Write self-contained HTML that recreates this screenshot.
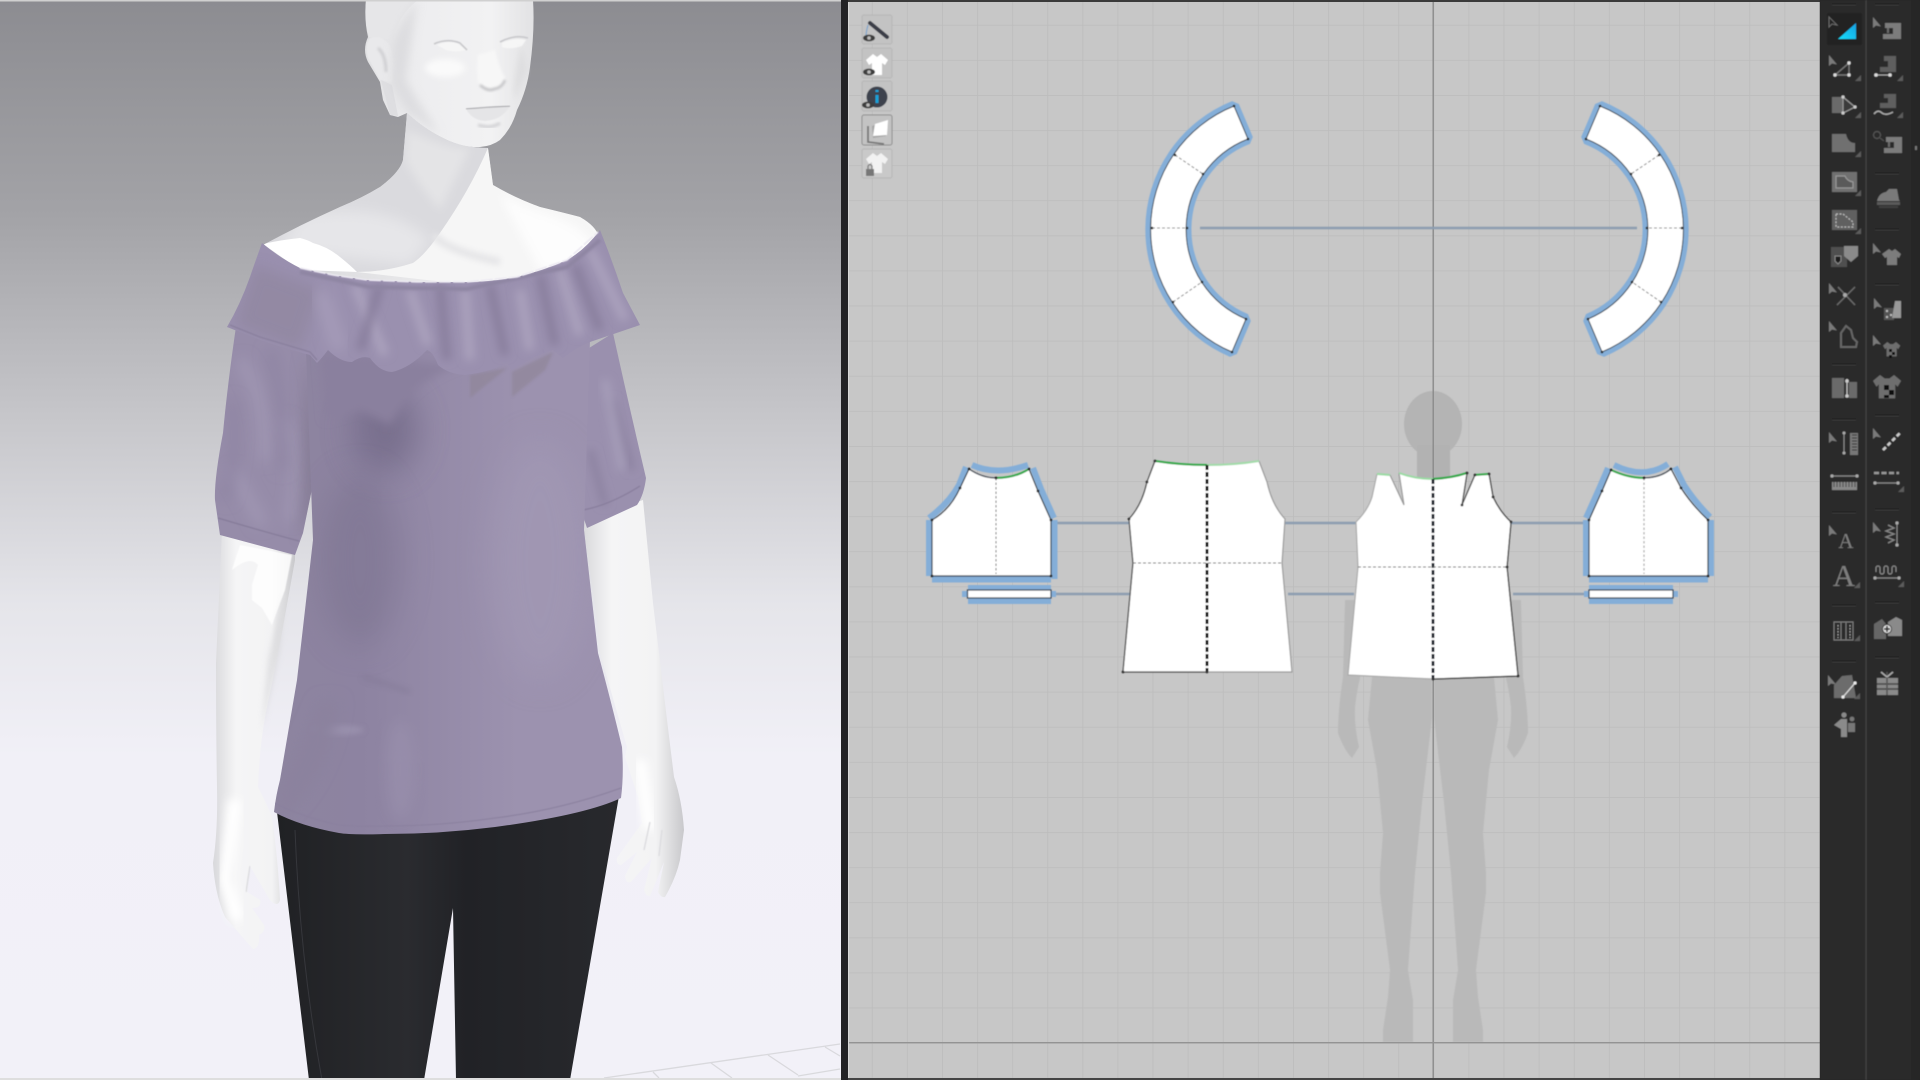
<!DOCTYPE html>
<html><head><meta charset="utf-8"><title>3D garment and 2D pattern editor</title>
<style>html,body{margin:0;padding:0;background:#222;width:1920px;height:1080px;overflow:hidden}svg{display:block}</style></head>
<body>
<svg xmlns="http://www.w3.org/2000/svg" width="1920" height="1080" viewBox="0 0 1920 1080">
<defs>
<linearGradient id="bg" x1="0" y1="0" x2="0" y2="1"><stop offset="0" stop-color="#8c8c91"/><stop offset=".2" stop-color="#a3a3a7"/><stop offset=".38" stop-color="#c5c5c9"/><stop offset=".56" stop-color="#e5e5ea"/><stop offset=".7" stop-color="#f1f0f7"/><stop offset="1" stop-color="#f2f1f8"/></linearGradient>
<linearGradient id="skin" x1="0" y1="0" x2="1" y2="0"><stop offset="0" stop-color="#d5d5d8"/><stop offset=".45" stop-color="#e8e8ea"/><stop offset="1" stop-color="#f8f8f8"/></linearGradient>
<linearGradient id="face" x1="0" y1="0" x2="1" y2="0"><stop offset="0" stop-color="#dfdfe1"/><stop offset=".3" stop-color="#ededef"/><stop offset=".75" stop-color="#f2f2f3"/><stop offset="1" stop-color="#e2e2e4"/></linearGradient>
<linearGradient id="arm" x1="0" y1="0" x2="1" y2="0"><stop offset="0" stop-color="#d8d8db"/><stop offset=".28" stop-color="#f5f5f6"/><stop offset=".72" stop-color="#f3f3f4"/><stop offset="1" stop-color="#c8c8cb"/></linearGradient>
<linearGradient id="shirt" x1="0" y1="0" x2="1" y2="0"><stop offset="0" stop-color="#8d849f"/><stop offset=".25" stop-color="#8d83a1"/><stop offset=".7" stop-color="#9c92af"/><stop offset="1" stop-color="#9c92af"/></linearGradient>
<linearGradient id="pant" x1="0" y1="0" x2="1" y2="0"><stop offset="0" stop-color="#202124"/><stop offset=".38" stop-color="#2a2b2f"/><stop offset=".55" stop-color="#212226"/><stop offset="1" stop-color="#28292d"/></linearGradient>
<linearGradient id="cyan" x1="0" y1="1" x2="1" y2="0"><stop offset="0" stop-color="#17e0ff"/><stop offset="1" stop-color="#1a9fe0"/></linearGradient>
<pattern id="grid" width="35.1" height="35.1" patternUnits="userSpaceOnUse" x="942" y="95"><path d="M0 0V35.1M0 0H35.1" stroke="#bcbcbc" stroke-width="1.6" fill="none"/></pattern>
<filter id="b0"><feGaussianBlur stdDeviation=".4"/></filter>
<filter id="b1" x="-30%" y="-30%" width="160%" height="160%"><feGaussianBlur stdDeviation="1.2"/></filter>
<filter id="b3" x="-30%" y="-30%" width="160%" height="160%"><feGaussianBlur stdDeviation="3"/></filter>
<filter id="b5" x="-40%" y="-40%" width="180%" height="180%"><feGaussianBlur stdDeviation="4.5"/></filter>
<filter id="b7" x="-40%" y="-40%" width="180%" height="180%"><feGaussianBlur stdDeviation="7"/></filter>
<filter id="b16" x="-80%" y="-80%" width="260%" height="260%"><feGaussianBlur stdDeviation="16"/></filter>
<clipPath id="vp"><rect x="0" y="0" width="841" height="1078"/></clipPath>
<clipPath id="ruf"><path id="rufp" d="M262 243Q254 265 250 277Q240 305 227 327L260 340Q290 350 310 355L317 363Q322 358 328 350Q340 362 352 362Q362 355 370 358Q380 372 392 372Q410 368 427 350Q433 352 438 365Q448 374 465 375Q490 372 507 363L512 370Q535 355 553 350L563 358Q575 348 590 342L640 325Q632 310 623 293Q612 260 600 230Q585 250 567 260Q545 270 517 277Q490 282 467 282L417 282L367 280L333 275L300 268Q280 258 262 243Z"/></clipPath>
<clipPath id="bod"><path d="M306 350L590 340L584 530L598 653Q612 705 622 747Q624 775 621 798Q585 815 495 827Q440 834 385 834Q350 835 339 833Q300 826 274 812Q276 795 280 780L297 680L313 540Z"/></clipPath>
<clipPath id="sk"><path d="M407 113Q425 130 447 140Q465 148 488 148L493 185Q515 198 540 207Q565 213 580 217Q596 226 599 237L600 300L262 300L263 245Q300 225 340 207Q362 198 380 187Q400 172 403 160Z"/></clipPath>
<clipPath id="sl"><path d="M237 320Q228 380 223 433Q214 480 215 500L220 535L295 555L303 533L330 400L320 330Z"/></clipPath>
<clipPath id="sr"><path d="M613 333Q630 410 646 478Q644 495 637 505L587 528L582 513L570 360Z"/></clipPath>
<g id="cur"><path d="M0 0V11L3 8.5L8 9.5Z" fill="#7a7a7a"/></g>
<g id="cor"><path d="M0 6H6V0Z" fill="#5c5c5c"/></g>
<g id="mach"><path d="M2 0H18V16H0V11H10V5H2Z" fill="#7b7b7b"/><rect x="4" y="5" width="2" height="5" fill="#6c6c6c"/></g>
<g id="eye"><ellipse cx="0" cy="0" rx="6" ry="3.4" fill="#3c3c3c"/><circle r="1.8" fill="#bbb"/></g>
<g id="sep"><path d="M0 0H24" stroke="#151515" stroke-width="1"/><path d="M0 1H24" stroke="#3b3b3b" stroke-width="1"/></g>
<g id="chk"><path d="M6 0L10 3H14L18 0L24 5L21 10L19 8V20H5V8L3 10L0 5Z" fill="#6e6e6e"/></g>
</defs>

<!-- 3D viewport -->
<rect width="841" height="1080" fill="url(#bg)"/>
<g clip-path="url(#vp)">
<g stroke="#d9d9dd" stroke-width="1.3" fill="none"><path d="M604 1078L840 1044M768 1055L798 1075M711 1063L732 1078M825 1047L840 1056M798 1076L840 1069M653 1072L659 1078"/></g>

<!-- head -->
<path d="M366 0Q364 20 368 37Q362 50 368 62L380 82L383 100L390 115L398 117L407 113Q425 130 447 140Q465 148 480 147Q492 146 500 140Q512 128 517 110Q527 90 530 67Q535 30 533 0Z" fill="url(#face)"/>
<path d="M366 0Q364 20 369 37L393 40Q398 15 418 0Z" fill="#e6e6e8"/>
<path d="M370 38Q364 45 368 58L380 80L392 82Q396 60 390 46Q382 34 370 38Z" fill="#e9e9eb" filter="url(#b0)"/>
<path d="M378 48Q386 55 386 72" stroke="#cfcfd2" stroke-width="3" fill="none" filter="url(#b1)"/>
<path d="M381 80L390 115L398 116L392 85Z" fill="#dedee1"/>
<path d="M418 0Q398 25 393 45L392 85L407 113L440 135L405 80Z" fill="#d2d2d5" filter="url(#b5)" opacity=".55"/>
<ellipse cx="445" cy="68" rx="20" ry="9" fill="#fafafa" filter="url(#b3)"/>
<g filter="url(#b0)">
<path d="M437 45Q448 40 458 44L466 50Q455 53 446 50Z" fill="#f6f6f6"/>
<path d="M502 43Q515 37 526 40L522 46Q510 50 502 47Z" fill="#f6f6f6"/>
<path d="M434 44Q447 38 460 43L467 50M500 42Q515 34 528 38" stroke="#c9c9cc" stroke-width="1.6" fill="none"/>
</g>
<path d="M478 55Q476 70 478 78Q476 88 494 89Q506 88 505 78Q498 65 495 50Z" fill="#f7f7f7" filter="url(#b1)"/>
<path d="M480 85Q488 92 494 89Q502 88 505 80" stroke="#bdbdc0" stroke-width="2.4" fill="none" filter="url(#b1)"/>
<path d="M466 109Q488 108 510 106Q502 120 485 121Q472 120 466 109Z" fill="#e5e5e7" filter="url(#b0)"/>
<path d="M466 109Q488 107 510 106" stroke="#adadb1" stroke-width="1.2" fill="none" filter="url(#b0)"/>
<path d="M478 125Q492 129 500 123" stroke="#d3d3d6" stroke-width="3" fill="none" filter="url(#b1)"/>
<path d="M522 45Q512 80 515 100L527 70Z" fill="#dadadc" filter="url(#b3)" opacity=".7"/>

<!-- neck & shoulders -->
<path d="M407 113Q425 130 447 140Q465 148 488 148L493 185Q515 198 540 207Q565 213 580 217Q596 226 599 237L600 300L262 300L263 245Q300 225 340 207Q362 198 380 187Q400 172 403 160Z" fill="url(#skin)"/>
<g clip-path="url(#sk)">
<path d="M407 113Q425 130 447 140Q465 148 488 148Q470 190 440 233Q425 255 413 263Q385 272 357 272L262 270V245L340 207L380 187Q400 172 403 160Z" fill="#dadade"/>
<path d="M300 215Q390 200 430 240L410 265L280 250Z" fill="#e6e6e9" filter="url(#b7)"/>
<path d="M407 130Q450 150 470 148L440 210Q415 180 405 160Z" fill="#e4e4e6" filter="url(#b5)"/>
<path d="M488 148Q470 190 440 233Q425 255 413 263Q385 272 357 272L600 300L599 237L580 217L540 207L493 185Z" fill="#f6f6f6"/>
<path d="M500 195L540 212Q575 222 590 240L600 270L540 270Z" fill="#fdfdfd" filter="url(#b5)"/>
<path d="M434 235Q445 250 500 262" stroke="#e6e6e8" stroke-width="8" fill="none" filter="url(#b3)"/>
<path d="M263 244Q280 240 300 238Q308 240 313 243Q328 247 340 257Q350 265 357 272L300 270Z" fill="#fff"/>
</g>

<!-- left arm -->
<path d="M222 530L216 663Q216 730 217 787Q218 830 213 863Q215 895 225 917L253 949Q260 948 259 935Q266 932 264 925L252 908Q262 908 260 900L247 892L250 866Q258 880 270 900Q278 908 280 900Q278 860 272 817Q265 800 258 787Q260 740 267 707Q277 660 283 627L295 560L295 530Z" fill="url(#arm)"/>
<path d="M232 570Q250 555 258 565L252 585L252 600L262 608L272 625L285 590L292 555L240 545Z" fill="#fff" opacity=".85" filter="url(#b0)"/>
<path d="M268 660Q276 620 285 595L280 650L262 730Z" fill="#d4d4d7" filter="url(#b3)" opacity=".6"/>
<path d="M235 800L225 880L238 920" stroke="#fff" stroke-width="14" fill="none" filter="url(#b5)"/>
<path d="M250 866L246 892" stroke="#dcdcdf" stroke-width="1.4" fill="none" filter="url(#b0)"/>

<!-- right arm -->
<path d="M583 520L597 620L600 653L627 747L625 757L638 797L642 823L617 858Q616 865 621 865L637 852L625 876Q626 884 631 882L652 858L644 890Q646 897 650 896L664 862L658 892Q661 898 665 897Q676 878 680 860L684 830Q682 800 674 777L667 720L653 603L643 500Z" fill="url(#arm)"/>
<path d="M640 760L650 830" stroke="#fff" stroke-width="12" fill="none" filter="url(#b5)"/>
<path d="M650 822L644 850M662 830L659 856" stroke="#dcdcdf" stroke-width="1.4" fill="none" filter="url(#b0)"/>

<!-- pants -->
<path d="M277 812L309 1080H424L453 908L456 1080H570L619 796L621 790Z" fill="url(#pant)"/>
<path d="M295 830Q300 960 322 1080" stroke="#36373c" stroke-width="1" fill="none"/>

<!-- sleeves -->
<path d="M237 320Q228 380 223 433Q214 480 215 500L220 535L295 555L303 533L330 400L320 330Z" fill="#968ca9"/>
<g clip-path="url(#sl)">
<path d="M240 360Q268 400 265 460M285 420Q305 470 290 520M232 470Q255 510 262 525" stroke="#a39ab6" stroke-width="9" fill="none" filter="url(#b7)"/>
<path d="M232 400Q240 450 225 500M270 350Q285 400 282 470" stroke="#8d83a1" stroke-width="8" fill="none" filter="url(#b7)"/>
<path d="M305 350L328 480L300 540Z" fill="#80778f" filter="url(#b7)" opacity=".7"/>
<path d="M218 518Q258 530 299 541" stroke="#857b99" stroke-width="1.2" fill="none" filter="url(#b0)"/>
</g>
<path d="M613 333Q630 410 646 478Q644 495 637 505L587 528L582 513L570 360Z" fill="#9a90ae"/>
<g clip-path="url(#sr)">
<path d="M612 400L632 470M590 450L605 505" stroke="#8a809e" stroke-width="6" fill="none" filter="url(#b5)"/>
<path d="M605 380L622 470" stroke="#a8a0bb" stroke-width="7" fill="none" filter="url(#b5)"/>
<path d="M583 510Q610 505 640 486" stroke="#877d9b" stroke-width="1.2" fill="none" filter="url(#b0)"/>
</g>

<!-- body -->
<path d="M306 350L590 340L584 530L598 653Q612 705 622 747Q624 775 621 798Q585 815 495 827Q440 834 385 834Q350 835 339 833Q300 826 274 812Q276 795 280 780L297 680L313 540Z" fill="url(#shirt)"/>
<g clip-path="url(#bod)">
<ellipse cx="385" cy="430" rx="32" ry="42" fill="#736b88" filter="url(#b16)" opacity=".8"/>
<ellipse cx="360" cy="560" rx="40" ry="85" fill="#7a728e" filter="url(#b16)" opacity=".5"/>
<path d="M320 355L460 365Q430 375 410 395L390 425L360 410L325 420Z" fill="#8a809e" filter="url(#b5)"/>
<path d="M470 398L470 375L507 368Z" fill="#908699" filter="url(#b1)" opacity=".7"/>
<path d="M512 397L512 372L553 352L545 370Z" fill="#908699" filter="url(#b1)" opacity=".7"/>
<ellipse cx="540" cy="560" rx="50" ry="120" fill="#a39ab5" filter="url(#b16)" opacity=".6"/>
<ellipse cx="338" cy="730" rx="26" ry="5" fill="#9f96b2" filter="url(#b3)" opacity=".7"/>
<path d="M363 677Q390 685 410 692" stroke="#7f7692" stroke-width="5" fill="none" filter="url(#b3)" opacity=".4"/>
<path d="M280 820Q330 780 340 700L320 700L280 790Z" fill="#8b829e" filter="url(#b7)"/>
<ellipse cx="400" cy="770" rx="14" ry="50" fill="#a299b5" filter="url(#b7)" opacity=".35"/>
<path d="M274 803Q305 818 339 825Q360 827 385 826Q440 826 495 818Q560 810 621 788" stroke="#8a809e" stroke-width="1.1" fill="none" filter="url(#b0)"/>
</g>

<!-- ruffle -->
<path d="M262 243Q254 265 250 277Q240 305 227 327L260 340Q290 350 310 355L317 363Q322 358 328 350Q340 362 352 362Q362 355 370 358Q380 372 392 372Q410 368 427 350Q433 352 438 365Q448 374 465 375Q490 372 507 363L512 370Q535 355 553 350L563 358Q575 348 590 342L640 325Q632 310 623 293Q612 260 600 230Q585 250 567 260Q545 270 517 277Q490 282 467 282L417 282L367 280L333 275L300 268Q280 258 262 243Z" fill="#9a90af"/>
<g clip-path="url(#ruf)">
<path d="M255 265L235 325L300 350L320 290Z" fill="#90869f" filter="url(#b7)" opacity=".7"/>
<path d="M320 290L340 350" stroke="#a69cb9" stroke-width="14" fill="none" filter="url(#b7)"/>
<path d="M355 285L385 355M410 290L428 345M465 290L470 360M520 290L530 350M560 270L580 335M590 250L625 320" stroke="#aca3be" stroke-width="9" fill="none" filter="url(#b5)"/>
<path d="M380 285L360 350M440 285L447 360M490 285L505 355M540 275L555 345M575 265L600 330" stroke="#877d9b" stroke-width="8" fill="none" filter="url(#b5)"/>
<path d="M300 272L370 287L467 289L567 267L600 240" stroke="#8e85a2" stroke-width="4" fill="none" filter="url(#b1)"/>
<path d="M230 325L260 337L310 352L317 360" stroke="#8a809e" stroke-width="1.4" fill="none" filter="url(#b0)"/>
</g>
<path d="M300 268L333 275L367 280L417 282L467 282L517 277L567 260L598 232" stroke="#ece9f2" stroke-width="1.6" fill="none" stroke-dasharray="12 2" filter="url(#b0)"/>
</g>
<rect y="1078" width="841" height="2" fill="#dedede"/>
<rect width="841" height="1.5" fill="#d0d0d0"/>

<!-- divider -->
<rect x="841" width="7" height="1080" fill="#222225"/>

<!-- pattern pane -->
<rect x="848" width="972" height="1080" fill="#c7c7c7"/>
<rect x="848" width="972" height="1080" fill="url(#grid)"/>
<rect x="848" width="1" height="1080" fill="#d8d8d8"/>
<rect x="848" width="972" height="2" fill="#3a3a3a"/>
<rect x="848" y="1078" width="972" height="2" fill="#444"/>

<!-- avatar silhouette -->
<g filter="url(#b0)">
<g fill="#b9b9b9">
<path d="M1372 677L1368 720L1377 770L1383 833L1380 873L1380 893L1390 970L1388 997L1383 1030L1383 1042H1413V1000L1408 970L1415 873L1417 853L1422 803L1432 718V660H1360V550H1433Z"/>
<path d="M1494 677L1498 720L1489 770L1483 833L1486 873L1486 893L1476 970L1478 997L1483 1030L1483 1042H1453V1000L1458 970L1451 873L1449 853L1444 803L1434 718V660H1506V550H1433Z"/>
<path d="M1345 600L1343 677Q1338 710 1338 733Q1344 750 1352 758L1359 747Q1354 725 1355 707Q1357 690 1360 678L1365 600Z"/>
<path d="M1521 600L1523 677Q1528 710 1528 733Q1522 750 1514 758L1507 747Q1512 725 1511 707Q1509 690 1506 678L1501 600Z"/>
<path d="M1378 520L1365 660H1501L1488 520Z"/>
</g>
<ellipse cx="1433" cy="424" rx="29" ry="33" fill="#b4b4b4"/>
<path d="M1417 445V482H1450V445Z" fill="#b2b2b2"/>
</g>

<!-- axes -->
<rect x="1432.5" y="2" width="1.4" height="1076" fill="#8b8b8b"/>
<rect x="849" y="1042" width="971" height="1.4" fill="#939393"/>

<g filter="url(#b0)">
<!-- connectors -->
<g stroke="#8c9db0" stroke-width="2.4" fill="none">
<path d="M1200 228H1637"/>
<path d="M1057 523H1130M1285 523H1356M1511 523H1584"/>
<path d="M1056 594H1130M1288 594H1354M1513 594H1584"/>
</g>

<!-- arcs -->
<path d="M1234 106A133 133 0 0 0 1232 352L1246 319A97 97 0 0 1 1248 139Z" fill="#fff" stroke="#84aed8" stroke-width="10.5" stroke-linejoin="bevel" paint-order="stroke"/>
<path d="M1234 106A133 133 0 0 0 1232 352L1246 319A97 97 0 0 1 1248 139Z" fill="#fff" stroke="#3a4452" stroke-width="1"/>
<path d="M1175 155L1203 174M1152 228H1187M1173 302L1202 282" stroke="#8a8a8a" stroke-width="1" stroke-dasharray="3 2" fill="none"/>
<path d="M1600 106A133 133 0 0 1 1602 352L1588 319A97 97 0 0 0 1586 139Z" fill="#fff" stroke="#84aed8" stroke-width="10.5" stroke-linejoin="bevel" paint-order="stroke"/>
<path d="M1600 106A133 133 0 0 1 1602 352L1588 319A97 97 0 0 0 1586 139Z" fill="#fff" stroke="#3a4452" stroke-width="1"/>
<path d="M1659 155L1631 174M1682 228H1647M1661 302L1632 282" stroke="#8a8a8a" stroke-width="1" stroke-dasharray="3 2" fill="none"/>
<g fill="#222"><circle cx="1234" cy="106" r="1.3"/><circle cx="1248" cy="139" r="1.3"/><circle cx="1175" cy="155" r="1.3"/><circle cx="1203" cy="174" r="1.3"/><circle cx="1152" cy="228" r="1.3"/><circle cx="1187" cy="228" r="1.3"/><circle cx="1173" cy="302" r="1.3"/><circle cx="1202" cy="282" r="1.3"/><circle cx="1246" cy="319" r="1.3"/><circle cx="1232" cy="352" r="1.3"/><circle cx="1600" cy="106" r="1.3"/><circle cx="1586" cy="139" r="1.3"/><circle cx="1659" cy="155" r="1.3"/><circle cx="1631" cy="174" r="1.3"/><circle cx="1682" cy="228" r="1.3"/><circle cx="1647" cy="228" r="1.3"/><circle cx="1661" cy="302" r="1.3"/><circle cx="1632" cy="282" r="1.3"/><circle cx="1588" cy="319" r="1.3"/><circle cx="1602" cy="352" r="1.3"/></g>

<!-- left sleeve piece -->
<g fill="none" stroke="#84aed8" stroke-width="6"><path d="M929 520V576"/><path d="M1054.5 520V579"/><path d="M932 579.5H1051"/><path d="M929 518Q949 503 959 485L966 467"/><path d="M972 465Q996 476 1028 465"/><path d="M1033 468L1041 489L1054 518"/></g>
<path d="M932 520Q950 510 960 488L969 469Q982 478 996 478Q1015 478 1029 469L1038 491L1051 520V576H932Z" fill="#fff"/>
<path d="M969 469Q982 478 996 478" stroke="#3b4450" stroke-width="1.2" fill="none"/>
<path d="M996 478Q1015 478 1029 469" stroke="#35a84b" stroke-width="2" fill="none"/>
<path d="M932 520V576H1051V520L1038 491L1029 469M932 520Q950 510 960 488L969 469" stroke="#2d3745" stroke-width="1.2" fill="none"/>
<path d="M996 478V574" stroke="#666" stroke-width="1" stroke-dasharray="2.5 2"/>
<g fill="#222"><circle cx="932" cy="520" r="1.4"/><circle cx="960" cy="488" r="1.4"/><circle cx="969" cy="469" r="1.4"/><circle cx="996" cy="478" r="1.4"/><circle cx="1029" cy="469" r="1.4"/><circle cx="1038" cy="491" r="1.4"/><circle cx="1051" cy="520" r="1.4"/><circle cx="1051" cy="576" r="1.4"/><circle cx="932" cy="576" r="1.4"/></g>
<g fill="#84aed8"><rect x="968" y="585" width="83" height="5"/><rect x="968" y="598" width="83" height="6"/><rect x="962" y="591" width="5" height="6"/><rect x="1051" y="591" width="5" height="6"/></g>
<rect x="967.5" y="590" width="83.5" height="8" fill="#fff" stroke="#2d3745" stroke-width="1.2"/>

<!-- right sleeve piece -->
<g fill="none" stroke="#84aed8" stroke-width="6"><path d="M1586 520V576"/><path d="M1711 520V576"/><path d="M1589 579.5H1708"/><path d="M1586 518L1599 489L1608 468"/><path d="M1614 465Q1644 480 1668 464"/><path d="M1675 467L1684 485Q1695 502 1710 517"/></g>
<path d="M1589 520L1602 491L1611 470Q1628 478 1644 478Q1660 478 1671 469L1681 488Q1692 505 1708 520V576H1589Z" fill="#fff"/>
<path d="M1589 576V520L1602 491L1611 470M1671 469L1681 488Q1692 505 1708 520V576H1589" stroke="#2d3745" stroke-width="1.2" fill="none"/>
<path d="M1611 470Q1628 478 1644 478" stroke="#35a84b" stroke-width="1.8" fill="none"/>
<path d="M1644 478Q1660 478 1671 469" stroke="#3b4450" stroke-width="1.2" fill="none"/>
<path d="M1644 478V574" stroke="#aaa" stroke-width="1.2" stroke-dasharray="2.5 2"/>
<g fill="#222"><circle cx="1589" cy="520" r="1.4"/><circle cx="1602" cy="491" r="1.4"/><circle cx="1611" cy="470" r="1.4"/><circle cx="1644" cy="478" r="1.4"/><circle cx="1671" cy="469" r="1.4"/><circle cx="1681" cy="488" r="1.4"/><circle cx="1708" cy="520" r="1.4"/><circle cx="1708" cy="576" r="1.4"/><circle cx="1589" cy="576" r="1.4"/></g>
<g fill="#84aed8"><rect x="1589" y="585" width="84" height="5"/><rect x="1589" y="598" width="84" height="6"/><rect x="1584" y="591" width="5" height="6"/><rect x="1673" y="591" width="5" height="6"/></g>
<rect x="1589" y="590" width="84" height="8" fill="#fff" stroke="#2d3745" stroke-width="1.2"/>

<!-- front body -->
<path d="M1155 461Q1180 465 1207 465Q1235 465 1259 461L1267 482Q1272 505 1285 519L1282 563L1292 672H1123L1133 563L1129 519Q1142 505 1147 482Z" fill="#fff"/>
<path d="M1155 461L1147 482Q1142 505 1129 519L1133 563L1123 672H1207" stroke="#444" stroke-width="1.2" fill="none"/>
<path d="M1259 461L1267 482Q1272 505 1285 519L1282 563L1292 672H1207" stroke="#9a9a9a" stroke-width="1.2" fill="none"/>
<path d="M1155 461Q1180 465 1207 465" stroke="#36a84a" stroke-width="2" fill="none"/>
<path d="M1207 465Q1235 465 1259 461" stroke="#a2dba9" stroke-width="2" fill="none"/>
<path d="M1207 465V672" stroke="#000" stroke-width="2.7" stroke-dasharray="5 2"/>
<path d="M1133 563H1282" stroke="#6a6a6a" stroke-width="1.1" stroke-dasharray="3 2"/>

<!-- back body -->
<path d="M1377 474L1390 475L1404 505L1399 473Q1415 479 1433 479Q1452 478 1467 473L1462 505L1475 475L1489 474L1493 497Q1500 512 1511 522L1507 567L1518 676L1433 679L1348 675L1358 567L1356 522Q1368 510 1372 497Z" fill="#fff"/>
<path d="M1377 474L1372 497Q1368 510 1356 522L1358 567L1348 675L1433 679" stroke="#aaa" stroke-width="1.2" fill="none"/>
<path d="M1390 475L1404 505L1399 473" stroke="#999" stroke-width="1.2" fill="none"/>
<path d="M1467 473L1462 505L1475 475" stroke="#444" stroke-width="1.2" fill="none"/>
<path d="M1489 474L1493 497Q1500 512 1511 522L1507 567L1518 676L1433 679" stroke="#333" stroke-width="1.2" fill="none"/>
<path d="M1377 474L1390 475M1399 473Q1415 479 1433 479" stroke="#9adba3" stroke-width="2" fill="none"/>
<path d="M1433 479Q1452 478 1467 473M1475 475L1489 474" stroke="#36a84a" stroke-width="2" fill="none"/>
<path d="M1433 479V679" stroke="#0d1620" stroke-width="2.7" stroke-dasharray="5 2"/>
<path d="M1358 567H1507" stroke="#6a6a6a" stroke-width="1.1" stroke-dasharray="3 2"/>
<g fill="#333"><circle cx="1155" cy="461" r="1.4"/><circle cx="1147" cy="482" r="1.4"/><circle cx="1129" cy="519" r="1.4"/><circle cx="1123" cy="672" r="1.4"/><circle cx="1207" cy="672" r="1.4"/><circle cx="1467" cy="473" r="1.4"/><circle cx="1462" cy="505" r="1.4"/><circle cx="1475" cy="475" r="1.4"/><circle cx="1489" cy="474" r="1.4"/><circle cx="1493" cy="497" r="1.4"/><circle cx="1511" cy="522" r="1.4"/><circle cx="1507" cy="567" r="1.4"/><circle cx="1518" cy="676" r="1.4"/><circle cx="1433" cy="679" r="1.4"/></g>

<!-- pattern mini toolbar -->
<g fill="#c3c3c3" stroke="#b6b6b6" stroke-width="1"><rect x="862" y="15" width="30" height="29" rx="2"/><rect x="862" y="48" width="30" height="30" rx="2"/><rect x="862" y="81" width="30" height="30" rx="2"/><rect x="862" y="115" width="30" height="30" rx="2" stroke="#8f8f8f"/><rect x="862" y="149" width="30" height="29" rx="2" fill="#c9c9c9"/></g>
<path d="M870 23L887 37" stroke="#3a3e46" stroke-width="4" stroke-linecap="round"/>
<path d="M868 25Q866 32 866 37" stroke="#6ea0d0" stroke-width="1" fill="none"/>
<use href="#eye" x="869" y="38"/>
<path d="M873 54L877 57L881 54L888 60L885 65L882 63V75H872V63L869 65L866 60Z" fill="#fff"/>
<use href="#eye" x="869" y="72"/>
<circle cx="877" cy="97" r="10.5" fill="#3c424e"/>
<path d="M877 90V92M877 95V103" stroke="#19a0d8" stroke-width="3"/>
<use href="#eye" x="868" y="105"/>
<path d="M868 126V142L884 144" stroke="#777" stroke-width="1.8" fill="none"/>
<path d="M872 126L887 121L886 136L873 138Z" fill="#8a8a8a" opacity=".5"/>
<path d="M875 124L888 120L887 135L873 136Z" fill="#fff"/>
<path d="M873 153L877 156L881 153L888 159L885 164L882 162V173H872V162L869 164L866 159Z" fill="#f2f2f2"/>
<rect x="866" y="169" width="8" height="7" fill="#777"/><path d="M868 169V166Q870 163 872 166V169" stroke="#777" stroke-width="1.2" fill="none"/>

<!-- right toolbar -->
<rect x="1820" width="100" height="1080" fill="#2b2b2b"/>
<rect x="1865.5" width="1.2" height="1080" fill="#454545"/>
<rect x="1911" width="9" height="1080" fill="#262626"/>
<rect x="1915" y="146" width="2" height="4" fill="#777"/>
<rect x="1827" y="13" width="35" height="32" rx="2" fill="#202020"/>

<use href="#sep" x="1832" y="4"/><use href="#sep" x="1875" y="4"/><use href="#sep" x="1875" y="173"/><use href="#sep" x="1875" y="229"/><use href="#sep" x="1875" y="284"/><use href="#sep" x="1832" y="364"/><use href="#sep" x="1832" y="419"/><use href="#sep" x="1875" y="415"/><use href="#sep" x="1832" y="512"/><use href="#sep" x="1875" y="509"/><use href="#sep" x="1832" y="605"/><use href="#sep" x="1875" y="602"/><use href="#sep" x="1832" y="661"/><use href="#sep" x="1875" y="657"/>

<!-- col 1 -->
<path d="M1829 17V27L1832 24L1837 25Z" fill="none" stroke="#6a6a6a" stroke-width="1"/>
<path d="M1838 39H1856V23Z" fill="url(#cyan)"/>

<use href="#cur" x="1829" y="55"/><path d="M1835 75H1849V63Z" fill="none" stroke="#777" stroke-width="1.4"/><g fill="#ddd"><circle cx="1835" cy="75" r="1.7"/><circle cx="1849" cy="75" r="1.7"/><circle cx="1849" cy="63" r="1.7"/></g><use href="#cor" x="1855" y="75"/>
<rect x="1832" y="97" width="12" height="16" fill="#6a6a6a"/><path d="M1843 97L1855 107L1843 113Z" fill="#3a3a3a" stroke="#999" stroke-width="1.2"/><g fill="#ccc"><circle cx="1843" cy="113" r="1.6"/><circle cx="1855" cy="107" r="1.6"/><circle cx="1843" cy="97" r="1.6"/></g><use href="#cor" x="1855" y="112"/>
<path d="M1832 134H1846Q1848 143 1855 143V152H1832Z" fill="#6f6f6f"/><use href="#cor" x="1855" y="151"/>
<rect x="1832" y="172" width="25" height="20" fill="#6f6f6f"/><path d="M1836 176H1845Q1847 181 1853 182V188H1836Z" fill="#5a5a5a" stroke="#999" stroke-width="1.2"/><use href="#cor" x="1855" y="190"/>
<rect x="1832" y="210" width="25" height="20" fill="#616161"/><path d="M1836 214H1843L1853 222V227H1836Z" fill="none" stroke="#bbb" stroke-width="1.2" stroke-dasharray="2 1.5"/><use href="#cor" x="1855" y="228"/>
<rect x="1831" y="247" width="16" height="20" fill="#505050"/><path d="M1835 256H1841V261L1838 264L1835 261Z" fill="#1c1c1c" stroke="#888"/><path d="M1844 246H1858V256L1851 262L1844 256Z" fill="#8a8a8a"/>
<use href="#cur" x="1829" y="283"/><path d="M1837 305L1855 287M1838 287L1855 305" stroke="#6c6c6c" stroke-width="1.4"/><circle cx="1845" cy="295" r="2" fill="#aaa"/>
<use href="#cur" x="1829" y="321"/><path d="M1841 333L1846 326L1851 330L1853 338L1857 342L1856 347H1841Z" fill="none" stroke="#666" stroke-width="2"/>
<rect x="1832" y="378" width="12" height="20" fill="#6a6a6a"/><rect x="1849" y="382" width="8" height="16" fill="#6a6a6a"/><path d="M1847 379V397" stroke="#bbb" stroke-width="1.5"/><circle cx="1847" cy="381" r="1.8" fill="#ccc"/><circle cx="1847" cy="396" r="1.8" fill="#ccc"/>

<use href="#cur" x="1829" y="432"/><path d="M1844 433V453" stroke="#888" stroke-width="1.2"/><circle cx="1844" cy="433" r="1.5" fill="#aaa"/><circle cx="1844" cy="453" r="1.5" fill="#aaa"/><rect x="1850" y="433" width="8" height="22" fill="#777"/><path d="M1852 435H1857M1852 438H1857M1852 441H1857M1852 444H1857M1852 447H1857M1852 450H1857" stroke="#333" stroke-width=".9"/>
<path d="M1832 476H1857" stroke="#888" stroke-width="1.2"/><circle cx="1832" cy="476" r="1.6" fill="#aaa"/><circle cx="1857" cy="476" r="1.6" fill="#aaa"/><rect x="1832" y="482" width="25" height="8" fill="#888"/><path d="M1834 482V487M1837 482V487M1840 482V487M1843 482V487M1846 482V487M1849 482V487M1852 482V487M1855 482V487" stroke="#333" stroke-width=".8"/>
<use href="#cur" x="1829" y="525"/><text x="1846" y="548" font-family="'Liberation Serif',serif" font-size="21" text-anchor="middle" fill="#7e7e7e">A</text>
<text x="1844" y="586" font-family="'Liberation Serif',serif" font-size="31" text-anchor="middle" fill="#7e7e7e">A</text><use href="#cor" x="1854" y="582"/>
<path d="M1834 622H1853V640H1834ZM1841 622V640M1846 622V640" fill="none" stroke="#7a7a7a" stroke-width="1.2"/><path d="M1838 625V638M1850 625V638" stroke="#aaa" stroke-width="1" stroke-dasharray="1.5 1.5"/><use href="#cor" x="1854" y="635"/>
<use href="#cur" x="1828" y="675"/><path d="M1834 685L1842 676L1852 675L1856 698H1834Z" fill="#6c6c6c"/><path d="M1843 697L1855 683" stroke="#ddd" stroke-width="1.3"/><circle cx="1843" cy="697" r="1.6" fill="#eee"/><circle cx="1855" cy="683" r="1.6" fill="#eee"/><use href="#cor" x="1854" y="693"/>
<circle cx="1844" cy="715" r="2.6" fill="#8a8a8a"/><path d="M1834 725L1841 719H1847V737H1841V729Z" fill="#8a8a8a"/><circle cx="1852" cy="719" r="2.4" fill="#777"/><path d="M1848 723H1855V732H1848Z" fill="#777"/>

<!-- col 2 -->
<use href="#cur" x="1873" y="17"/><use href="#mach" x="1883" y="23"/>
<path d="M1884 56H1896V72H1880V67H1888V61H1884Z" fill="#5f5f5f"/><path d="M1876 75H1890" stroke="#aaa" stroke-width="1.2"/><circle cx="1876" cy="75" r="1.8" fill="#ddd"/><circle cx="1890" cy="75" r="1.8" fill="#ddd"/><use href="#cor" x="1897" y="75"/>
<path d="M1884 94H1896V108H1880V103H1888V98H1884Z" fill="#5f5f5f"/><path d="M1874 114Q1878 109 1882 113Q1886 116 1893 112" stroke="#aaa" stroke-width="1.5" fill="none"/><use href="#cor" x="1897" y="112"/>
<circle cx="1877" cy="135" r="3.5" fill="none" stroke="#555" stroke-width="1.2"/><path d="M1880 138L1884 141" stroke="#555"/><use href="#mach" x="1884" y="137"/>
<path d="M1877 201Q1879 193 1886 192L1889 189H1897L1899 200L1900 201Z" fill="#7a7a7a"/><rect x="1877" y="202" width="23" height="3" fill="#5a5a5a"/><rect x="1879" y="206" width="19" height="2" fill="#3f3f3f"/>
<use href="#cur" x="1873" y="243"/><path d="M1889 249L1892 251L1895 249L1901 254L1899 258L1897 257V265H1887V257L1885 258L1882 254Z" fill="#7c7c7c"/>
<use href="#cur" x="1874" y="298"/><rect x="1884" y="308" width="10" height="12" fill="#555"/><path d="M1886 310H1888V312H1886ZM1890 314H1892V316H1890ZM1886 316H1888V318H1886Z" fill="#bbb"/><path d="M1895 301H1901V318H1892Z" fill="#999"/>
<use href="#cur" x="1873" y="335"/><use href="#chk" transform="translate(1883 342) scale(.72)"/><path d="M1889 349H1892V352H1889ZM1892 352H1895V355H1892ZM1889 355H1892V358H1889Z" fill="#111"/>
<use href="#chk" transform="translate(1873 375) scale(1.17)"/><path d="M1884 385H1889V390H1884ZM1889 390H1894V395H1889ZM1884 395H1889V398H1884Z" fill="#111"/>

<use href="#cur" x="1873" y="428"/><path d="M1883 450L1900 433" stroke="#ccc" stroke-width="2.6" stroke-dasharray="4 2.5"/>
<path d="M1874 473H1899" stroke="#999" stroke-width="2.6" stroke-dasharray="5 2.5"/><path d="M1875 483H1898" stroke="#888" stroke-width="1.2"/><circle cx="1875" cy="483" r="1.6" fill="#aaa"/><circle cx="1898" cy="483" r="1.6" fill="#aaa"/><use href="#cor" x="1898" y="486"/>
<use href="#cur" x="1873" y="522"/><path d="M1888 525L1894 528L1886 531L1894 534L1886 537L1894 540L1888 543" stroke="#888" stroke-width="1.3" fill="none"/><path d="M1897 522V545" stroke="#888" stroke-width="1.2"/><circle cx="1897" cy="523" r="1.6" fill="#aaa"/><circle cx="1897" cy="545" r="1.6" fill="#aaa"/>
<path d="M1876 572V568A2 2 0 0 1 1880 568V572A2 2 0 0 0 1884 572V568A2 2 0 0 1 1888 568V572A2 2 0 0 0 1892 572V568A2 2 0 0 1 1896 568V572" stroke="#888" stroke-width="1.2" fill="none"/><path d="M1875 578H1899" stroke="#888" stroke-width="1.2"/><circle cx="1875" cy="578" r="1.6" fill="#aaa"/><circle cx="1899" cy="578" r="1.6" fill="#aaa"/><use href="#cor" x="1898" y="581"/>
<path d="M1874 624L1882 619L1886 624V639H1874Z" fill="#666"/><path d="M1888 622L1896 617L1902 620V636H1888Z" fill="#8a8a8a"/><circle cx="1887" cy="629" r="4.5" fill="#ddd" stroke="#333"/><path d="M1884 629H1890M1887 626V632" stroke="#222" stroke-width="1.5"/>
<path d="M1877 678H1898V695H1877Z" fill="#8a8a8a"/><path d="M1877 684H1898M1877 689H1898" stroke="#444" stroke-width="1.4"/><path d="M1887 672V695" stroke="#555" stroke-width="1.5"/><path d="M1887 677L1881 672M1887 677L1893 672" stroke="#aaa" stroke-width="1.6"/>
</g>
</svg>
</body></html>
